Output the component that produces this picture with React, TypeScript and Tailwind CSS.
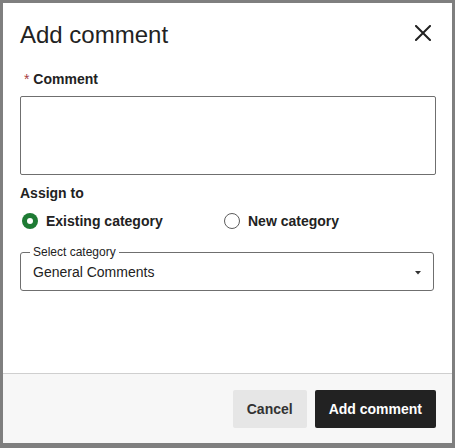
import React, { useState } from "react";

function CloseIcon() {
  return (
    <svg width="16" height="16" viewBox="0 0 16 16" fill="none" stroke="#222" strokeWidth="2" strokeLinecap="square">
      <path d="M1 1 L15 15 M15 1 L1 15" />
    </svg>
  );
}

function Radio({ checked }: { checked: boolean }) {
  return checked ? (
    <span className="flex h-4 w-4 items-center justify-center rounded-full bg-[#1e7b34]">
      <span className="h-[6px] w-[6px] rounded-full bg-white" />
    </span>
  ) : (
    <span className="h-4 w-4 rounded-full border-[1.5px] border-[#5c5c5c] bg-white" />
  );
}

export default function App() {
  const [target, setTarget] = useState<"existing" | "new">("existing");

  return (
    <div
      className="h-[448px] w-[455px] overflow-hidden bg-[#7f7f7f] pl-[3px] pt-[3px] text-[#222]"
      style={{ fontFamily: '"Liberation Sans", Arial, sans-serif' }}
    >
      <div className="flex h-[440px] w-[449px] flex-col bg-white">
        {/* Header */}
        <div className="flex items-start justify-between pl-[17px] pr-[21px] pt-[18px]">
          <h2 className="text-[24px] leading-[28px] font-normal">Add comment</h2>
          <button className="mt-[4px] h-4 w-4">
            <CloseIcon />
          </button>
        </div>

        {/* Body */}
        <div className="flex flex-col pl-[17px] pr-[16px] pt-[20px]">
          <label className="pl-1 text-[14px] leading-[20px] font-bold">
            <span className="font-normal text-[#a8403f]">*</span> Comment
          </label>
          <textarea className="mt-[7px] h-[79px] w-[416px] resize-none rounded-[2px] border border-[#6f6f6f] outline-none" />

          <div className="mt-[8px] text-[14px] leading-[20px] font-bold">Assign to</div>
          <div className="mt-[8px] flex items-center text-[14px] leading-[20px] font-bold">
            <button className="flex w-[202px] items-center gap-2 pl-[2px]" onClick={() => setTarget("existing")}>
              <Radio checked={target === "existing"} />
              <span>Existing category</span>
            </button>
            <button className="flex items-center gap-2 pl-[2px]" onClick={() => setTarget("new")}>
              <Radio checked={target === "new"} />
              <span>New category</span>
            </button>
          </div>

          <fieldset className="mt-[13px] w-[414px] rounded-[3px] border border-[#6f6f6f] px-[12px] pb-[8px] pt-[2px]">
            <legend className="-ml-[3px] px-[3px] text-[12px] leading-[16px]">Select category</legend>
            <div className="flex items-center justify-between text-[14px] leading-[20px]">
              <span>General Comments</span>
              <svg width="6" height="4" viewBox="0 0 6 4" className="mt-[2px]">
                <path d="M0 0 L6 0 L3 3.5 Z" fill="#333" />
              </svg>
            </div>
          </fieldset>
        </div>

        {/* Footer */}
        <div className="mt-auto flex justify-end gap-2 border-t border-[#cfcfcf] bg-[#f7f7f7] pb-[15px] pr-[16px] pt-[16px]">
          <button className="h-[38px] rounded-[2px] bg-[#e6e6e6] px-[14px] text-[14px] font-bold text-[#333]">
            Cancel
          </button>
          <button className="h-[38px] rounded-[2px] bg-[#222] px-[14px] text-[14px] font-bold text-white">
            Add comment
          </button>
        </div>
      </div>
    </div>
  );
}
